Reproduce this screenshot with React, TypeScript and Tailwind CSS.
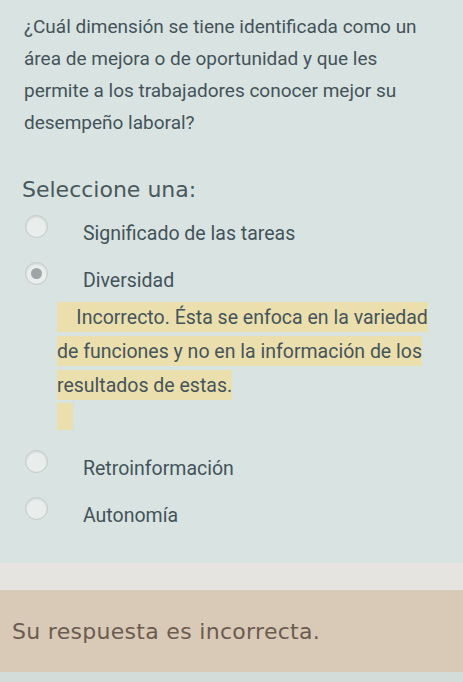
import React from "react";

type Option = { label: string; checked?: boolean };

const Radio: React.FC<{ checked?: boolean }> = ({ checked }) => (
  <div className="w-[23px] h-[23px] shrink-0 rounded-full bg-[#e9edec] border border-[#c3c9c9] shadow-[inset_0_1px_2px_rgba(0,0,0,0.12)] flex items-center justify-center">
    {checked && <div className="w-[11px] h-[11px] rounded-full bg-[#9fa4a6]" />}
  </div>
);

const OptionRow: React.FC<{ opt: Option; className?: string }> = ({ opt, className }) => (
  <div className={`flex items-start pl-[25px] gap-[35px] ${className ?? ""}`}>
    <Radio checked={opt.checked} />
    <span className="mt-[7px] leading-[24px] text-[19.5px] text-[#43535a]">{opt.label}</span>
  </div>
);

export default function App() {
  return (
    <div className="min-h-[682px] flex flex-col bg-[#d5dddb] font-['Roboto','Liberation_Sans',sans-serif]">
      <div className="bg-[#d9e3e1]">
        {/* question */}
        <p className="pt-[11px] pl-[24px] pr-[25px] text-[19px] leading-[32px] text-[#44535a]">
          ¿Cuál dimensión se tiene identificada como un área de mejora o de oportunidad y que les
          permite a los trabajadores conocer mejor su desempeño laboral?
        </p>

        <div className="mt-[36px] pl-[22px] leading-[30px] text-[22px] text-[#48585c] font-['DejaVu_Sans',sans-serif]">
          Seleccione una:
        </div>

        <OptionRow className="mt-[10px] h-[47px]" opt={{ label: "Significado de las tareas" }} />
        <OptionRow className="h-[38px]" opt={{ label: "Diversidad", checked: true }} />

        {/* feedback */}
        <div className="pl-[57px] w-[447px]">
          <p className="text-[19.5px] leading-[34px] text-[#45545a]">
            <span className="bg-[#ecdfae] py-[3.5px] box-decoration-clone">
              {"\u00a0\u00a0\u00a0\u00a0"}Incorrecto. Ésta se enfoca en la variedad de funciones y no en la
              información de los resultados de estas.
            </span>
          </p>
          <div className="mt-[1px] w-[16px] h-[27px] bg-[#ecdfae]" />
        </div>

        <OptionRow className="mt-[20px] h-[47px]" opt={{ label: "Retroinformación" }} />
        <OptionRow className="h-[66px]" opt={{ label: "Autonomía" }} />
      </div>

      <div className="h-[27px] bg-[#e6e4e0]" />
      <div className="h-[82px] bg-[#d8cab7] flex items-center px-[12px]">
        <span className="text-[22px] tracking-[0.3px] text-[#6c5b50] font-['DejaVu_Sans',sans-serif]">
          Su respuesta es incorrecta.
        </span>
      </div>
      <div className="flex-1 bg-[#d4dcda]" />
    </div>
  );
}
